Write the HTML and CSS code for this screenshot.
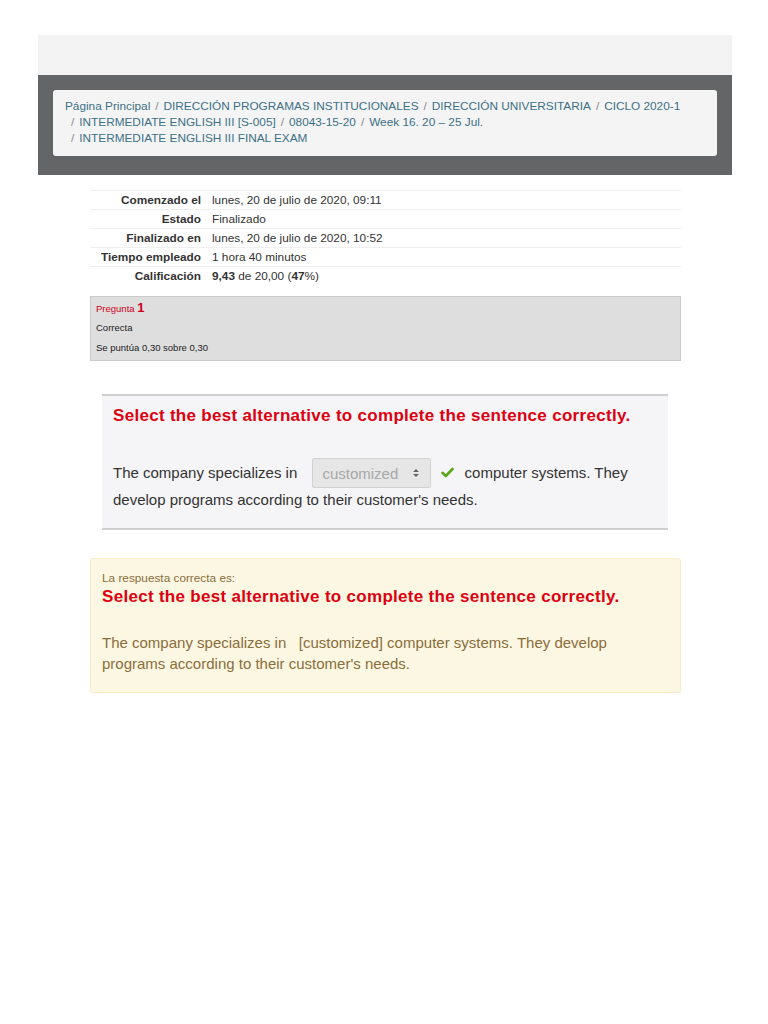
FILE: index.html
```html
<!DOCTYPE html>
<html lang="es">
<head>
<meta charset="utf-8">
<title>INTERMEDIATE ENGLISH III FINAL EXAM</title>
<link rel="stylesheet" href="styles.css">
</head>
<body>
<div class="page">
  <div class="header-top"></div>
  <div class="header-nav">
    <ol class="breadcrumb">
      <li class="crumb first"><a href="#">Página Principal</a></li>
      <li class="crumb"><a href="#">DIRECCIÓN PROGRAMAS INSTITUCIONALES</a></li>
      <li class="crumb"><a href="#">DIRECCIÓN UNIVERSITARIA</a></li>
      <li class="crumb"><a href="#">CICLO 2020-1</a></li>
      <li class="break"></li>
      <li class="crumb lead"><a href="#">INTERMEDIATE ENGLISH III [S-005]</a></li>
      <li class="crumb"><a href="#">08043-15-20</a></li>
      <li class="crumb"><a href="#">Week 16. 20 – 25 Jul.</a></li>
      <li class="break"></li>
      <li class="crumb lead"><a href="#">INTERMEDIATE ENGLISH III FINAL EXAM</a></li>
    </ol>
  </div>

  <div class="content">
    <table class="summary">
      <tr><th>Comenzado el</th><td>lunes, 20 de julio de 2020, 09:11</td></tr>
      <tr><th>Estado</th><td>Finalizado</td></tr>
      <tr><th>Finalizado en</th><td>lunes, 20 de julio de 2020, 10:52</td></tr>
      <tr><th>Tiempo empleado</th><td>1 hora 40 minutos</td></tr>
      <tr><th>Calificación</th><td><b>9,43</b> de 20,00 (<b>47</b>%)</td></tr>
    </table>

    <div class="qinfo">
      <div class="qno">Pregunta <span class="num">1</span></div>
      <div class="qstate">Correcta</div>
      <div class="qgrade">Se puntúa 0,30 sobre 0,30</div>
    </div>

    <div class="formulation">
      <p class="qtitle">Select the best alternative to complete the sentence correctly.</p>
      <p class="qtext">The company specializes in <span class="select"><span class="sel-val">customized</span><svg class="sel-arrows" width="8" height="10" viewBox="0 0 8 10"><path d="M1 4 L4 1 L7 4 Z M1 6 L4 9 L7 6 Z" fill="#666"/></svg></span><svg class="check" width="13" height="11" viewBox="0 0 13 11"><path d="M1.5 5.8 L4.8 9 L11.5 2" fill="none" stroke="#5aa51a" stroke-width="2.6" stroke-linecap="round" stroke-linejoin="round"/></svg> computer systems. They develop programs according to their customer's needs.</p>
    </div>

    <div class="feedback">
      <div class="fb-label">La respuesta correcta es:</div>
      <p class="qtitle fb-title">Select the best alternative to complete the sentence correctly.</p>
      <p class="fb-text">The company specializes in &nbsp; [customized] computer systems. They develop programs according to their customer's needs.</p>
    </div>
  </div>
</div>
</body>
</html>
```

FILE: styles.css
```css
html, body {
  margin: 0;
  padding: 0;
  background: #ffffff;
}

body {
  font-family: "Liberation Sans", Arial, sans-serif;
  color: #333333;
}

.page {
  margin: 35px 36px 0 38px;
}

.header-top {
  height: 40px;
  background: #f3f3f3;
}

.header-nav {
  background: #646566;
  padding: 15px 15px 19px 15px;
}

.breadcrumb {
  list-style: none;
  margin: 0;
  padding: 8px 10px 10px 12px;
  background: #f4f4f4;
  border-radius: 3px;
  display: flex;
  flex-wrap: wrap;
  font-size: 11.8px;
  line-height: 16px;
}

.crumb a {
  color: #3b7087;
  text-decoration: none;
}

.crumb::before {
  content: "/";
  color: #8a8a8a;
  padding: 0 5px 0 5px;
}

.crumb.first::before {
  content: none;
}

.crumb.lead::before {
  padding-left: 6px;
}

.break {
  flex-basis: 100%;
  height: 0;
}

.content {
  padding: 15px 51px 0 52px;
}

.summary {
  width: 100%;
  border-collapse: collapse;
  font-size: 11.8px;
  line-height: 18px;
}

.summary th,
.summary td {
  border-top: 1px solid #efefef;
  padding: 0;
  height: 18px;
  vertical-align: middle;
}

.summary th {
  width: 111px;
  text-align: right;
  font-weight: bold;
  color: #333;
  padding-right: 11px;
}

.summary td {
  color: #333;
}

.qinfo {
  margin-top: 11px;
  background: #dedede;
  border: 1px solid #cacaca;
  padding: 4px 5px 6px 5px;
  font-size: 9.5px;
  color: #222;
}

.qno {
  color: #d0021b;
  line-height: 14px;
}

.qno .num {
  font-size: 13px;
  font-weight: bold;
}

.qstate {
  margin-top: 5px;
  line-height: 13px;
}

.qgrade {
  margin-top: 7px;
  line-height: 13px;
}

.formulation {
  margin: 33px 13px 0 12px;
  background: #f5f5f7;
  border-top: 2px solid #cfcfcf;
  border-bottom: 2px solid #cfcfcf;
  padding: 9px 11px 15px 11px;
}

.qtitle {
  margin: 0;
  color: #dd0010;
  font-weight: bold;
  font-size: 17px;
  letter-spacing: 0.3px;
  line-height: 22px;
}

.qtext {
  margin: 32px 0 0 0;
  font-size: 15px;
  line-height: 27px;
  color: #333;
}

.select {
  display: inline-flex;
  align-items: center;
  justify-content: space-between;
  box-sizing: border-box;
  width: 119px;
  height: 30px;
  margin: -3px 9px -3px 11px;
  padding: 0 10px 0 9px;
  background: #e6e6e6;
  border: 1px solid #d2d2d2;
  border-radius: 2px;
  vertical-align: middle;
  position: relative;
  top: -1px;
}

.sel-val {
  color: #a8a8a8;
  font-size: 15px;
}

.check {
  vertical-align: middle;
  margin-left: 1px;
  margin-right: 6px;
  position: relative;
  top: -2px;
}

.feedback {
  margin-top: 28px;
  background: #fcf7e2;
  border: 1px solid #f9ecc6;
  border-radius: 3px;
  padding: 12px 11px 18px 11px;
  color: #8a6d3b;
}

.fb-label {
  font-size: 11.8px;
  line-height: 14px;
}

.fb-title {
  margin-top: 1px;
}

.fb-text {
  margin: 24px 0 0 0;
  font-size: 15px;
  line-height: 21px;
}
```
